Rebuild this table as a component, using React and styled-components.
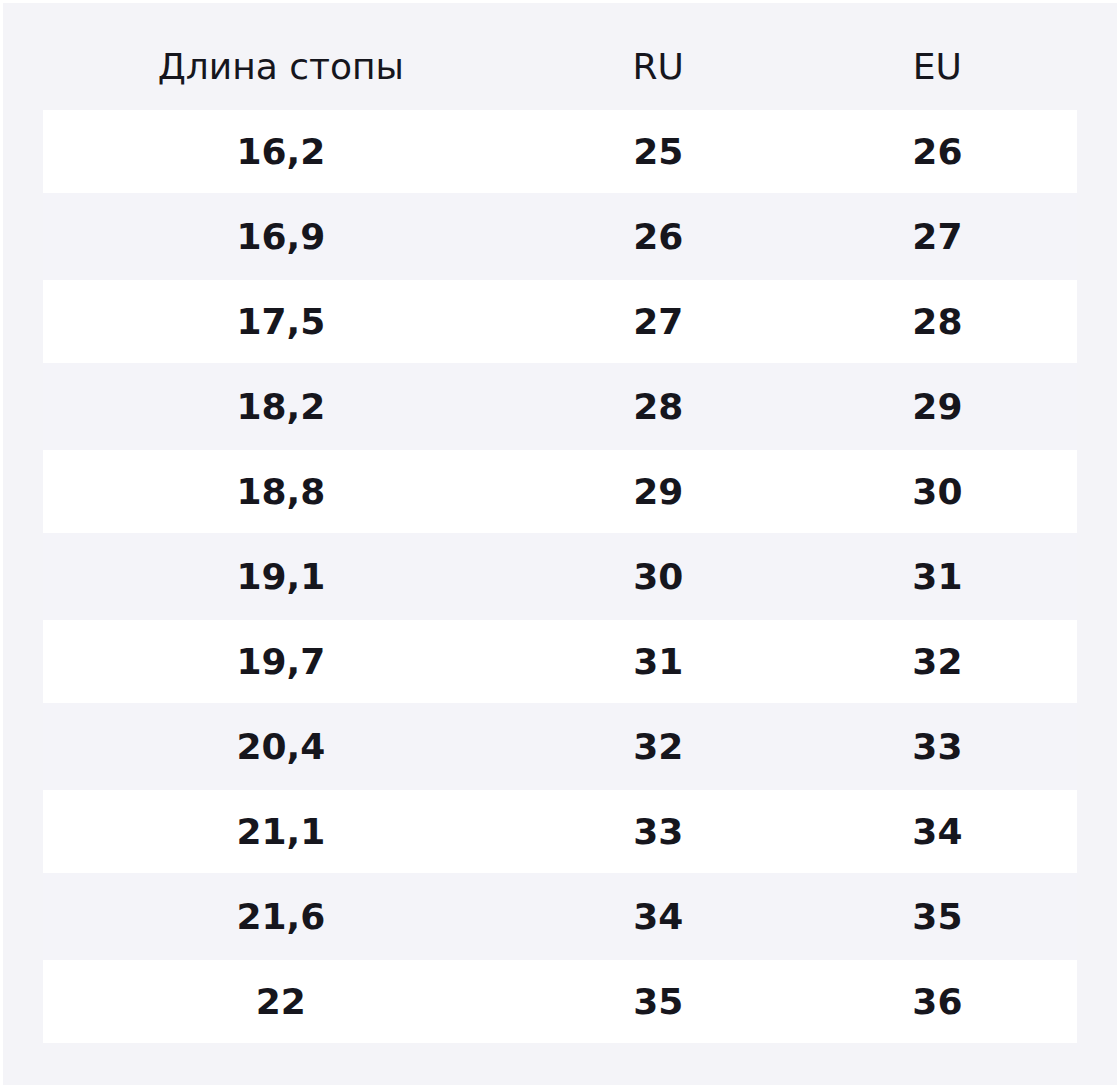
import styled, { createGlobalStyle } from "styled-components";

const GlobalStyle = createGlobalStyle`
    body {
        margin: 0;
        background: #ffffff;
        font-family: "DejaVu Sans", Verdana, sans-serif;
    }
`

const Frame = styled.div`
    padding: 3px;
    background: #ffffff;
`

const Panel = styled.div`
    background: #f4f4f8;
    padding: 20px 40px 42px;
`

const Row = styled.div`
    display: grid;
    grid-template-columns: 46% 27% 27%;
    align-items: center;
    height: ${(p) => p.$height}px;
    background: ${(p) => p.$background};
`

const Cell = styled.div`
    text-align: center;
    font-size: 36px;
    font-weight: ${(p) => (p.$bold ? 700 : 400)};
    color: #16161d;
`

const sizes = [
    ["16,2", 25, 26],
    ["16,9", 26, 27],
    ["17,5", 27, 28],
    ["18,2", 28, 29],
    ["18,8", 29, 30],
    ["19,1", 30, 31],
    ["19,7", 31, 32],
    ["20,4", 32, 33],
    ["21,1", 33, 34],
    ["21,6", 34, 35],
    ["22", 35, 36],
];

function App() {
    return (
        <Frame>
            <GlobalStyle />
            <Panel>
                <Row $height={87} $background="transparent">
                    <Cell>Длина стопы</Cell>
                    <Cell>RU</Cell>
                    <Cell>EU</Cell>
                </Row>
                {sizes.map((row, i) => (
                    <Row
                        key={row[0]}
                        $height={i % 2 === 0 ? 83 : 87}
                        $background={i % 2 === 0 ? "#ffffff" : "#f4f4f9"}
                    >
                        {row.map((v, j) => (
                            <Cell key={j} $bold>{v}</Cell>
                        ))}
                    </Row>
                ))}
            </Panel>
        </Frame>
    );
}

export default App;
